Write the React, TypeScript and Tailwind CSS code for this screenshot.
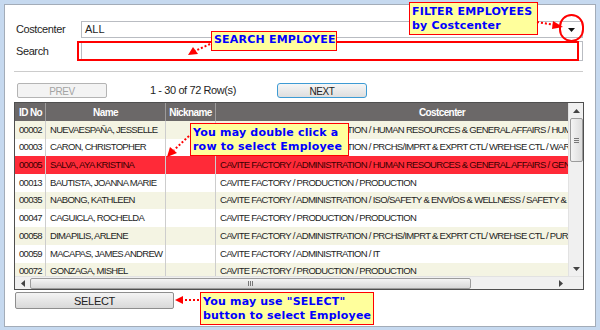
import React from 'react';

interface Employee {
  id: string;
  name: string;
  costcenter: string;
}

const employees: Employee[] = [
  { id: '00002', name: 'NUEVAESPAÑA, JESSELLE', costcenter: 'CAVITE FACTORY / ADMINISTRATION / HUMAN RESOURCES & GENERAL AFFAIRS / HUMAN RESOURCES' },
  { id: '00003', name: 'CARON, CHRISTOPHER', costcenter: 'CAVITE FACTORY / ADMINISTRATION / PRCHS/IMPRT & EXPRT CTL/ WREHSE CTL / WAREHOUSE' },
  { id: '00005', name: 'SALVA, AYA KRISTINA', costcenter: 'CAVITE FACTORY / ADMINISTRATION / HUMAN RESOURCES & GENERAL AFFAIRS / GENERAL AFFAIRS' },
  { id: '00013', name: 'BAUTISTA, JOANNA MARIE', costcenter: 'CAVITE FACTORY / PRODUCTION / PRODUCTION' },
  { id: '00035', name: 'NABONG, KATHLEEN', costcenter: 'CAVITE FACTORY / ADMINISTRATION / ISO/SAFETY & ENVI/OS & WELLNESS / SAFETY & HEALTH' },
  { id: '00047', name: 'CAGUICLA, ROCHELDA', costcenter: 'CAVITE FACTORY / PRODUCTION / PRODUCTION' },
  { id: '00058', name: 'DIMAPILIS, ARLENE', costcenter: 'CAVITE FACTORY / ADMINISTRATION / PRCHS/IMPRT & EXPRT CTL/ WREHSE CTL / PURCHASING' },
  { id: '00059', name: 'MACAPAS, JAMES ANDREW', costcenter: 'CAVITE FACTORY / ADMINISTRATION / IT' },
  { id: '00072', name: 'GONZAGA, MISHEL', costcenter: 'CAVITE FACTORY / PRODUCTION / PRODUCTION' },
];

const SELECTED = '00005';

// tiny black arrow used by the select and scrollbars
function Tri({ dir, color = '#111' }: { dir: 'up' | 'down' | 'left' | 'right'; color?: string }) {
  const pts = {
    up: '0,4 7,4 3.5,0',
    down: '0,0 7,0 3.5,4',
    left: '4,0 4,7 0,3.5',
    right: '0,0 0,7 4,3.5',
  }[dir];
  const horiz = dir === 'left' || dir === 'right';
  return (
    <svg width={horiz ? 4 : 7} height={horiz ? 7 : 4} viewBox={horiz ? '0 0 4 7' : '0 0 7 4'}>
      <polygon points={pts} fill={color} />
    </svg>
  );
}

function Note({ className, children }: { className: string; children: React.ReactNode }) {
  return (
    <div
      className={`absolute whitespace-nowrap border border-[#ff0000] bg-[#ffff9c] pl-[2px] font-['DejaVu_Sans',Verdana,sans-serif] text-[11px] font-bold leading-[14px] tracking-[0.2px] text-[#0000ff] ${className}`}
    >
      {children}
    </div>
  );
}

export default function App() {
  return (
    <div className="relative h-[330px] w-[600px] overflow-hidden bg-[#c6d9ef] pl-[4px] pt-[4px] font-['Liberation_Sans',Arial,sans-serif] text-[#1e1e1e]">
      <div className="flex h-[323px] w-[592px] flex-col border border-[#a3acb8] bg-white pl-[9px]">
        {/* Costcenter */}
        <div className="mt-[16px] flex h-[17px] items-center">
          <span className="w-[67px] pl-[2px] text-[11px] tracking-[-0.4px]">Costcenter</span>
          <div className="flex h-[17px] w-[502px] items-center justify-between border border-[#b9bcc2] bg-white pl-[3px] pr-[7px]">
            <span className="text-[11px]">ALL</span>
            <Tri dir="down" />
          </div>
        </div>

        {/* Search */}
        <div className="mt-[3px] flex h-[20px] items-center">
          <span className="w-[67px] pl-[2px] text-[11px] tracking-[-0.4px]">Search</span>
          <div className="h-[20px] w-[502px] border border-[#b9bcc2] bg-white" />
        </div>

        <div className="mt-[10px] h-px w-[569px] bg-[#cccccc]" />

        {/* Pager */}
        <div className="mt-[11px] flex h-[15px] items-center">
          <button className="ml-[3px] h-[15px] w-[90px] rounded-[2px] border border-[#b4b4b4] bg-[#f3f3f3] text-[10px] tracking-[-0.4px] text-[#a3a3a3]">
            PREV
          </button>
          <span className="ml-[43px] w-[127px] text-[11px] tracking-[-0.4px]">1 - 30 of 72 Row(s)</span>
          <button className="h-[15px] w-[90px] rounded-[3px] border border-[#3d9bd4] bg-gradient-to-b from-[#f6f6f6] to-[#dedede] text-[10px] tracking-[-0.4px] text-[#222]">
            NEXT
          </button>
        </div>

        {/* Grid */}
        <div className="mt-[4px] flex h-[188px] w-[570px] flex-col border border-[#4f4f4f]">
          <div className="flex h-[173px]">
            <div className="w-[553px] overflow-hidden">
              <div className="flex h-[18px] bg-[#6b6868] text-[10px] font-bold tracking-[-0.6px] text-white">
                <div className="flex w-[31px] shrink-0 items-center border-r border-[#9d9b9b] pl-[4px]">ID No</div>
                <div className="flex w-[120px] shrink-0 items-center justify-center border-r border-[#9d9b9b]">Name</div>
                <div className="flex w-[50px] shrink-0 items-center justify-center border-r border-[#9d9b9b]">Nickname</div>
                <div className="flex w-[452px] shrink-0 items-center justify-center">Costcenter</div>
              </div>
              {employees.map((e, i) => {
                const sel = e.id === SELECTED;
                const bg = sel ? 'bg-[#ff2a38] text-[#3a0000]' : i % 2 === 0 ? 'bg-[#f4f4e3]' : 'bg-white';
                return (
                  <div key={e.id} className={`flex h-[17.7px] text-[9.5px] tracking-[-0.7px] ${bg}`}>
                    <div className="flex w-[31px] shrink-0 items-center border-r border-[#cdcdcd] pl-[4px]">{e.id}</div>
                    <div className="flex w-[120px] shrink-0 items-center overflow-hidden whitespace-nowrap border-r border-[#cdcdcd] pl-[4px]">{e.name}</div>
                    <div className="w-[50px] shrink-0 border-r border-[#cdcdcd]" />
                    <div className="flex w-[452px] shrink-0 items-center overflow-hidden whitespace-nowrap pl-[4px]">{e.costcenter}</div>
                  </div>
                );
              })}
            </div>

            {/* vertical scrollbar */}
            <div className="flex w-[15px] flex-col items-center border-l border-[#e2e2e2] bg-[#f0f0f0]">
              <div className="flex h-[15px] items-center justify-center">
                <Tri dir="up" color="#444" />
              </div>
              <div className="flex h-[44px] w-[13px] flex-col items-center justify-center gap-[1px] rounded-[2px] border border-[#9c9c9c] bg-gradient-to-r from-[#f4f4f4] to-[#dcdcdc]">
                <div className="h-px w-[5px] bg-[#777]" />
                <div className="h-px w-[5px] bg-[#777]" />
                <div className="h-px w-[5px] bg-[#777]" />
              </div>
              <div className="flex-1" />
              <div className="flex h-[15px] items-center justify-center">
                <Tri dir="down" color="#444" />
              </div>
            </div>
          </div>

          {/* horizontal scrollbar */}
          <div className="flex h-[13px] border-t border-[#e2e2e2] bg-[#f0f0f0]">
            <div className="flex w-[553px] items-center">
              <div className="flex w-[15px] justify-center">
                <Tri dir="left" color="#444" />
              </div>
              <div className="flex h-[11px] w-[441px] items-center justify-center gap-[1px] rounded-[2px] border border-[#9c9c9c] bg-gradient-to-b from-[#f4f4f4] to-[#d8d8d8]">
                <div className="h-[5px] w-px bg-[#777]" />
                <div className="h-[5px] w-px bg-[#777]" />
                <div className="h-[5px] w-px bg-[#777]" />
              </div>
              <div className="flex-1" />
              <div className="flex w-[15px] justify-center">
                <Tri dir="right" color="#444" />
              </div>
            </div>
            <div className="w-[15px] bg-[#f0f0f0]" />
          </div>
        </div>

        <button className="ml-[1px] mt-[2px] h-[17px] w-[159px] rounded-[2px] border border-[#8e8e8e] bg-gradient-to-b from-[#f4f4f4] to-[#d9d9d9] text-[11px] tracking-[-0.3px] text-[#222]">
          SELECT
        </button>
      </div>

      {/* annotations */}
      <div className="absolute left-[77px] top-[41px] h-[20px] w-[502px] border-2 border-[#ff0000]" />
      <div className="absolute left-[559px] top-[14px] h-[28px] w-[25px] rounded-full border-2 border-[#ff0000]" />

      <Note className="left-[409px] top-[2px] h-[33px] w-[129px] pt-[2px]">
        FILTER EMPLOYEES
        <br />
        by Costcenter
      </Note>
      <Note className="left-[211px] top-[31px] h-[20px] w-[126px] pt-[1px]">SEARCH EMPLOYEE</Note>
      <Note className="left-[190px] top-[123px] h-[33px] w-[159px] pt-[2px]">
        You may double click a
        <br />
        row to select Employee
      </Note>
      <Note className="left-[200px] top-[292px] h-[33px] w-[174px] pt-[2px]">
        You may use "SELECT"
        <br />
        button to select Employee
      </Note>

      <svg className="pointer-events-none absolute left-0 top-0" width="600" height="330">
        <g stroke="#ff0000" strokeWidth="2" strokeDasharray="2 2" fill="none">
          <line x1="537" y1="22" x2="555" y2="25" />
          <line x1="210" y1="44" x2="195" y2="51" />
          <line x1="189" y1="136" x2="174" y2="150" />
          <line x1="199" y1="300" x2="182" y2="300" />
        </g>
        <g fill="#ff0000">
          <polygon points="563,27 553,21 552,29" />
          <polygon points="188,55 193,47 198,54" />
          <polygon points="167,157 170,147 177,153" />
          <polygon points="175,300 183,296 183,304" />
        </g>
      </svg>
    </div>
  );
}
